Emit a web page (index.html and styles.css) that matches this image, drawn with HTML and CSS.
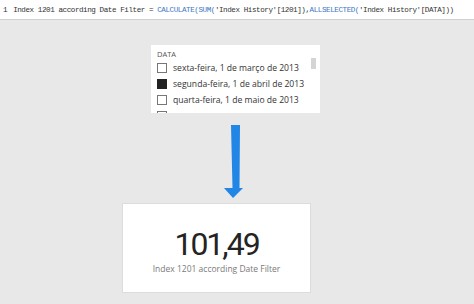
FILE: index.html
```html
<!DOCTYPE html>
<html>
<head>
<title>Index 1201</title>
<link rel="stylesheet" href="styles.css">
</head>
<body>

<div class="formula">
  <span class="line-no">1</span>
  <span>Index 1201 according Date Filter = <span class="fn">CALCULATE(SUM(</span>'Index History'[1201]),<span class="fn">ALLSELECTED(</span>'Index History'[DATA]))</span>
</div>

<div class="canvas">
  <div class="slicer">
    <div class="slicer-title">DATA</div>
    <div class="slicer-list">
      <label class="item"><span class="box"></span>sexta-feira, 1 de março de 2013</label>
      <label class="item"><span class="box checked"></span>segunda-feira, 1 de abril de 2013</label>
      <label class="item"><span class="box"></span>quarta-feira, 1 de maio de 2013</label>
      <label class="item"><span class="box"></span></label>
    </div>
    <div class="scroll-thumb"></div>
  </div>

  <svg class="arrow" width="22" height="76" viewBox="0 0 22 76">
    <path d="M9 1 L18 1 L17.5 64 L21 64 L11 74 L2 64 L10.5 64 Z" fill="#2186e6"/>
  </svg>

  <div class="card">
    <div class="card-value">101,49</div>
    <div class="card-label">Index 1201 according Date Filter</div>
  </div>
</div>

</body>
</html>
```

FILE: styles.css
```css
body {
  margin: 0;
  background: #e8e8e8;
  font-family: "Open Sans", sans-serif;
}
.formula {
  height: 19px;
  background: #fff;
  border-bottom: 1px solid #d0d0d0;
  display: flex;
  align-items: center;
  gap: 6px;
  padding-left: 3px;
  font-family: "Liberation Mono", monospace;
  font-size: 7.6px;
  letter-spacing: -0.44px;
  color: #333;
  white-space: nowrap;
}
.formula .fn {
  color: #3c78c3;
}
.canvas {
  padding-top: 25px;
}
.slicer {
  position: relative;
  width: 169px;
  height: 68px;
  margin-left: 151px;
  background: #fff;
  box-sizing: border-box;
  padding: 3.6px 0 0 6px;
  overflow: hidden;
}
.slicer-title {
  font-size: 7.5px;
  color: #555;
  line-height: 11px;
}
.slicer-list {
  display: flex;
  flex-direction: column;
}
.item {
  display: flex;
  align-items: center;
  gap: 6px;
  height: 16px;
  font-size: 8.6px;
  color: #333;
}
.box {
  width: 8px;
  height: 8px;
  border: 1px solid #777;
  background: #fff;
}
.box.checked {
  background: #222;
  border-color: #222;
}
.scroll-thumb {
  position: absolute;
  right: 4px;
  top: 13px;
  width: 5px;
  height: 11px;
  background: #d4d4d4;
}
.arrow {
  display: block;
  margin: 11px 0 0 222px;
}
.card {
  width: 189px;
  height: 90px;
  margin: 3px 0 0 122px;
  background: #fff;
  border: 1px solid #dcdcdc;
  box-sizing: border-box;
  display: flex;
  flex-direction: column;
  align-items: center;
  padding-top: 22px;
}
.card-value {
  font-family: Roboto, sans-serif;
  font-size: 32px;
  letter-spacing: -2px;
  color: #252423;
  line-height: 36px;
}
.card-label {
  font-size: 8.5px;
  color: #7a7a7a;
  margin-top: 1px;
}
```
